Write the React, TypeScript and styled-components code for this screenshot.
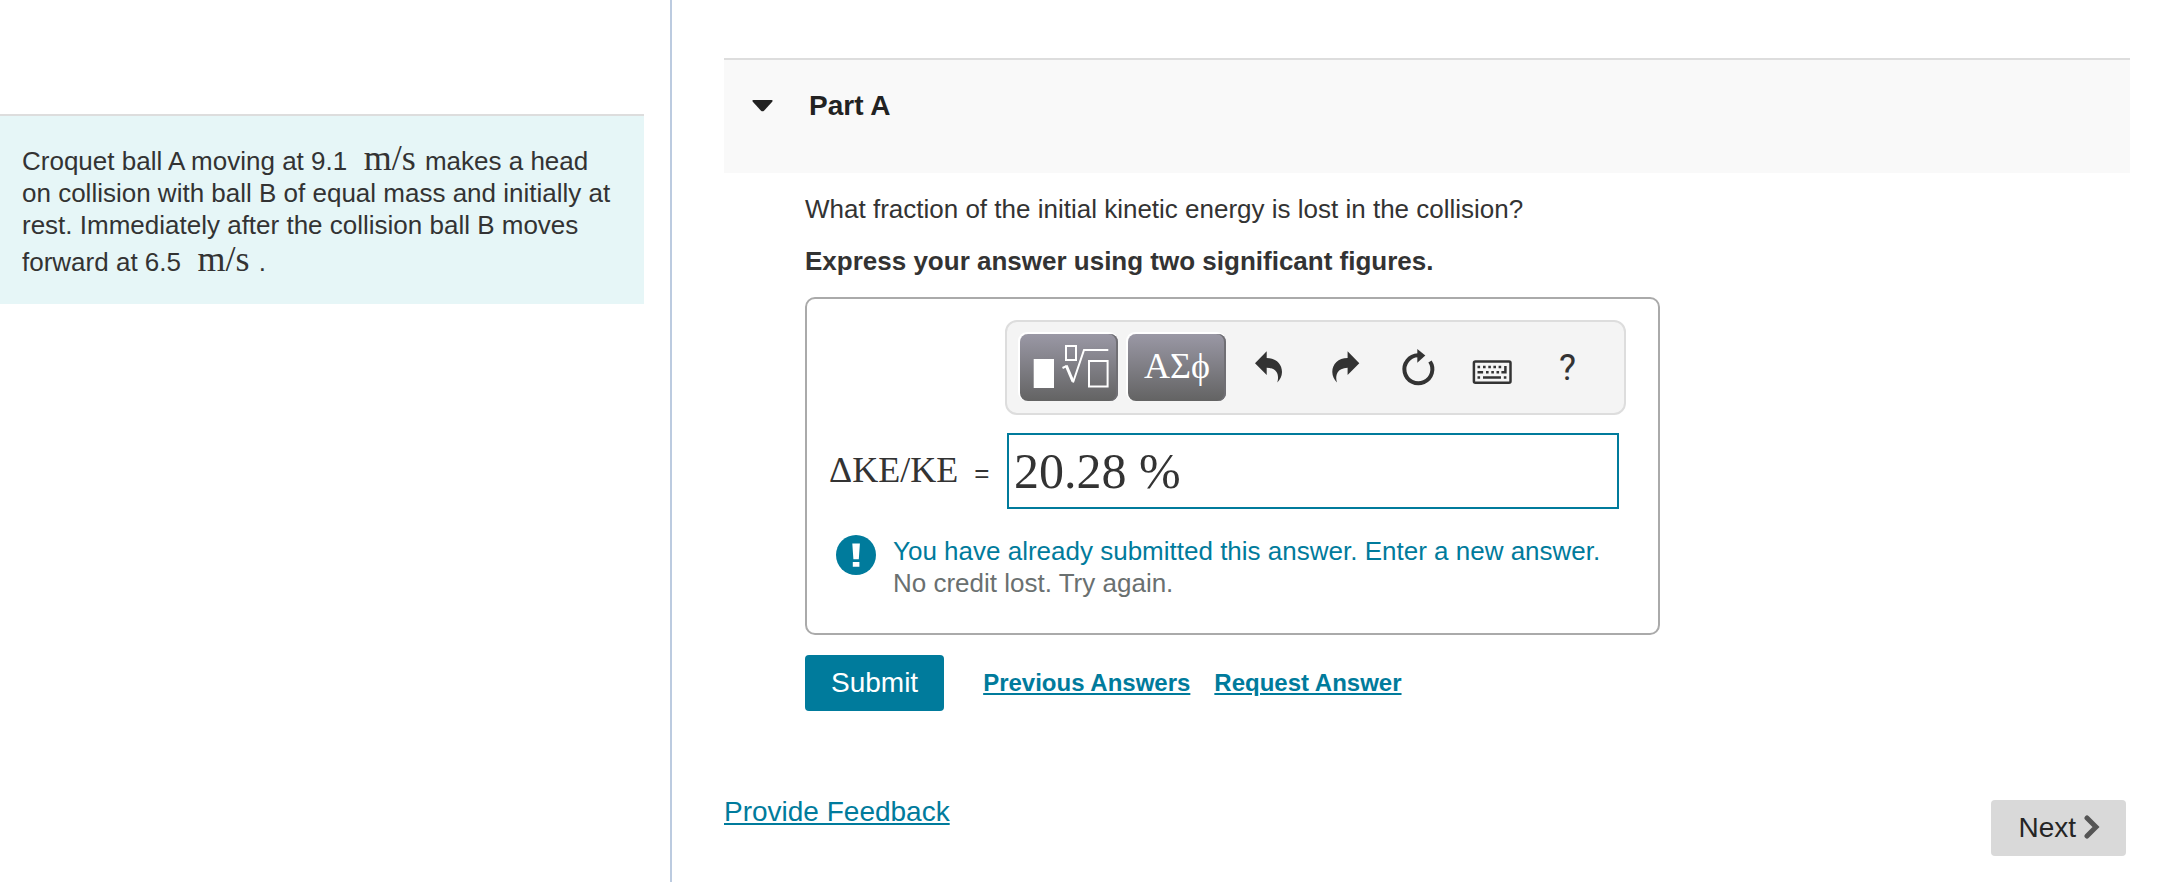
import React from 'react';
import styled, { createGlobalStyle } from 'styled-components';

const teal = '#007b9c';
const sans = '"Liberation Sans", Arial, Helvetica, sans-serif';
const serif = '"Liberation Serif", "Times New Roman", serif';

const GlobalStyle = createGlobalStyle`
  *, *::before, *::after { box-sizing: border-box; }
  body { margin: 0; background: #fff; color: #333; font: 26px/32px ${sans}; }
  button, input { font-family: inherit; color: inherit; margin: 0; }
  h2, p { margin: 0; }
`;

const Page = styled.div`
  display: grid;
  grid-template-columns: minmax(0, 28fr) minmax(0, 62fr);
  min-height: 100vh;
`;

const Sidebar = styled.aside`
  padding: 114px 26px 24px 0;
  border-right: 2px solid #bccbe0;
`;

const Problem = styled.p`
  padding: 24px 30px 26px 22px;
  border-top: 2px solid #ddd;
  background: #e6f6f7;
`;

const Unit = styled.span`
  padding: 0 2px;
  font: 36px/36px ${serif};
`;

const Main = styled.main`
  padding: 58px 30px 24px 52px;
`;

const PartHeader = styled.header`
  height: 115px;
  padding: 30px 28px;
  border-top: 2px solid #ddd;
  background: #f9f9f9;
`;

const PartTitle = styled.h2`
  font-size: 28px;
  line-height: 32px;
`;

const PartToggle = styled.button`
  display: flex;
  align-items: center;
  gap: 35px;
  padding: 0;
  border: 0;
  background: none;
  color: #222;
  font: inherit;
`;

const PartBody = styled.section`
  display: flex;
  flex-direction: column;
  gap: 20px;
  padding: 20px 0 0 81px;
`;

const Instruction = styled.p`
  font-weight: bold;
`;

const AnswerBox = styled.div`
  display: grid;
  grid-template-columns: 176px minmax(0, 1fr);
  align-items: center;
  row-gap: 18px;
  width: 100%;
  max-width: 855px;
  padding: 21px 32px 34px 22px;
  border: 2px solid #aaa;
  border-radius: 10px;
`;

const Toolbar = styled.div`
  grid-column: 2;
  display: flex;
  align-items: flex-start;
  gap: 4px;
  padding: 12px 13px;
  border: 2px solid #ddd;
  border-radius: 12px;
  background: #f4f4f4;
`;

const PaletteGroup = styled.div`
  display: flex;
  gap: 10px;
`;

const IconGroup = styled.div`
  display: flex;
`;

const PaletteButton = styled.button`
  display: grid;
  place-items: center;
  width: 98px;
  height: 67px;
  padding: 0;
  border: 0;
  border-radius: 8px;
  background: linear-gradient(#9a98a5, #636363);
  box-shadow: -1px -1px 0 1px #fff, inset -2px 0 0 #706f74;
  color: #fff;
`;

const GreekLabel = styled.span`
  padding-bottom: 4px;
  font: 36px/40px ${serif};
`;

const IconButton = styled.button`
  display: grid;
  place-items: center;
  width: 75px;
  height: 67px;
  padding: 0;
  border: 0;
  background: none;
  color: #333;
  font: 36px/40px Roboto, ${sans};
`;

const AnswerLabel = styled.label`
  display: flex;
  align-items: baseline;
  gap: 16px;
  padding-bottom: 2px;
  white-space: nowrap;
`;

const Formula = styled.span`
  font: 36px/40px ${serif};
`;

const InputWrap = styled.div`
  padding: 0 7px 0 2px;
`;

const AnswerInput = styled.input`
  display: block;
  width: 100%;
  height: 76px;
  padding: 0 5px;
  border: 2px solid ${teal};
  border-radius: 0;
  outline: 0;
  background: #fff;
  font: 50px/72px ${serif};
`;

const Feedback = styled.div`
  grid-column: 1 / -1;
  display: flex;
  gap: 17px;
  padding: 8px 0 0 7px;
`;

const FeedbackText = styled.div`
  display: flex;
  flex-direction: column;
`;

const FeedbackTitle = styled.p`
  color: ${teal};
`;

const FeedbackNote = styled.p`
  color: #6a7070;
`;

const Actions = styled.div`
  display: flex;
  align-items: center;
  gap: 24px;
`;

const SubmitButton = styled.button`
  height: 56px;
  margin-right: 15px;
  padding: 0 26px;
  border: 0;
  border-radius: 4px;
  background: ${teal};
  color: #fff;
  font-size: 28px;
`;

const ActionLink = styled.a`
  color: ${teal};
  font-size: 24px;
  font-weight: bold;
  text-underline-offset: 2px;
`;

const Footer = styled.footer`
  display: flex;
  justify-content: space-between;
  align-items: flex-start;
  padding: 85px 4px 0 0;
`;

const FeedbackLink = styled.a`
  color: ${teal};
  font-size: 28px;
  text-underline-offset: 2px;
`;

const NextButton = styled.button`
  display: flex;
  align-items: center;
  gap: 8px;
  height: 56px;
  margin-top: 4px;
  padding: 0 26px 0 27px;
  border: 0;
  border-radius: 4px;
  background: #d9d9d9;
  color: #252525;
  font-size: 28px;
`;

const arrowPath =
  'M25 29.3 36.7 17.3V24C46 24 52 30 52 38C52 42 50 46 47.3 48.5C49.5 41 47 34 36.7 33.7V41Z';

const TemplatesIcon = () => (
  <svg width="98" height="67" viewBox="0 0 98 67" fill="none" stroke="#fff" strokeWidth="2" aria-hidden="true">
    <rect x="13.7" y="25" width="20.3" height="29" fill="#fff" stroke="none" />
    <rect x="46" y="12" width="10" height="14" />
    <path d="M42.5 34 46.7 32" />
    <path d="M46.2 31.5 53 47.5" strokeWidth="3" />
    <path d="M53 48.5 64 16H88.3" />
    <rect x="69" y="27" width="18.6" height="25.5" />
  </svg>
);

const UndoIcon = () => (
  <svg width="75" height="67" viewBox="0 0 75 67" fill="currentColor" aria-hidden="true">
    <path d={arrowPath} />
  </svg>
);

const RedoIcon = () => (
  <svg width="75" height="67" viewBox="0 0 75 67" fill="currentColor" aria-hidden="true">
    <path d={arrowPath} transform="translate(79.3 0) scale(-1 1)" />
  </svg>
);

const ResetIcon = () => (
  <svg width="75" height="67" viewBox="0 0 75 67" aria-hidden="true">
    <path d="M38 21.3A14 14 0 1 0 50 27.5" fill="none" stroke="currentColor" strokeWidth="4" />
    <path d="M37.3 15 45.3 21.6 37.3 28.7Z" fill="currentColor" />
  </svg>
);

const KeyboardIcon = () => (
  <svg width="75" height="67" viewBox="0 0 75 67" fill="none" stroke="currentColor" strokeWidth="2.5" aria-hidden="true">
    <rect x="18.9" y="27.5" width="36.6" height="21.2" rx="1.5" />
    <path d="M22.5 33h2.6M28 33h2.6M33.3 33h2.6M38.4 33h2.6M43.6 33h2.6M22.5 38.2h5.6M31 38.2h2.6M36.3 38.2h2.6M41.5 38.2h2.6M46.4 38.2h4V32M22.5 43.4h2.6M28 43.4h18M48.8 43.4h2.6" />
  </svg>
);

const AlertIcon = () => (
  <svg width="40" height="40" viewBox="0 0 40 40" aria-hidden="true">
    <circle cx="20" cy="20" r="20" fill={teal} />
    <path d="M16.3 8.5h7.6L22.8 24.2h-5.4ZM16.8 27h6.6v4.8h-6.6Z" fill="#fff" />
  </svg>
);

const CaretIcon = () => (
  <svg width="22" height="12" viewBox="0 0 22 12" fill="currentColor" aria-hidden="true">
    <path d="M1.5 0H19.5Q21.5 0 20 2L12 10.7Q10.5 12 9 10.7L1 2Q-.5 0 1.5 0Z" />
  </svg>
);

const ChevronIcon = () => (
  <svg width="16" height="26" viewBox="0 0 16 26" fill="none" stroke="#555" strokeWidth="5" strokeLinecap="round" aria-hidden="true">
    <path d="M3 3 12 12 3 21" />
  </svg>
);

export default function App() {
  return (
    <>
      <GlobalStyle />
      <Page>
        <Sidebar>
          <Problem>
            Croquet ball A moving at 9.1 &nbsp;<Unit>m/s</Unit> makes a head on collision with ball B of
            equal mass and initially at rest. Immediately after the collision ball B moves forward at
            6.5 &nbsp;<Unit>m/s</Unit> .
          </Problem>
        </Sidebar>
        <Main>
          <PartHeader>
            <PartTitle>
              <PartToggle type="button" aria-expanded="true">
                <CaretIcon />
                Part A
              </PartToggle>
            </PartTitle>
          </PartHeader>
          <PartBody>
            <p>What fraction of the initial kinetic energy is lost in the collision?</p>
            <Instruction>Express your answer using two significant figures.</Instruction>
            <AnswerBox>
              <Toolbar role="toolbar" aria-label="Math input tools">
                <PaletteGroup>
                  <PaletteButton type="button" aria-label="Templates"><TemplatesIcon /></PaletteButton>
                  <PaletteButton type="button"><GreekLabel>ΑΣϕ</GreekLabel></PaletteButton>
                </PaletteGroup>
                <IconGroup>
                  <IconButton type="button" aria-label="Undo"><UndoIcon /></IconButton>
                  <IconButton type="button" aria-label="Redo"><RedoIcon /></IconButton>
                  <IconButton type="button" aria-label="Reset"><ResetIcon /></IconButton>
                  <IconButton type="button" aria-label="Keyboard shortcuts"><KeyboardIcon /></IconButton>
                  <IconButton type="button">?</IconButton>
                </IconGroup>
              </Toolbar>
              <AnswerLabel htmlFor="answer">
                <Formula>ΔKE/KE</Formula>
                <span>=</span>
              </AnswerLabel>
              <InputWrap>
                <AnswerInput id="answer" type="text" defaultValue="20.28 %" />
              </InputWrap>
              <Feedback role="status">
                <AlertIcon />
                <FeedbackText>
                  <FeedbackTitle>You have already submitted this answer. Enter a new answer.</FeedbackTitle>
                  <FeedbackNote>No credit lost. Try again.</FeedbackNote>
                </FeedbackText>
              </Feedback>
            </AnswerBox>
            <Actions>
              <SubmitButton type="submit">Submit</SubmitButton>
              <ActionLink href="#previous">Previous Answers</ActionLink>
              <ActionLink href="#request">Request Answer</ActionLink>
            </Actions>
          </PartBody>
          <Footer>
            <FeedbackLink href="#feedback">Provide Feedback</FeedbackLink>
            <NextButton type="button">Next <ChevronIcon /></NextButton>
          </Footer>
        </Main>
      </Page>
    </>
  );
}
